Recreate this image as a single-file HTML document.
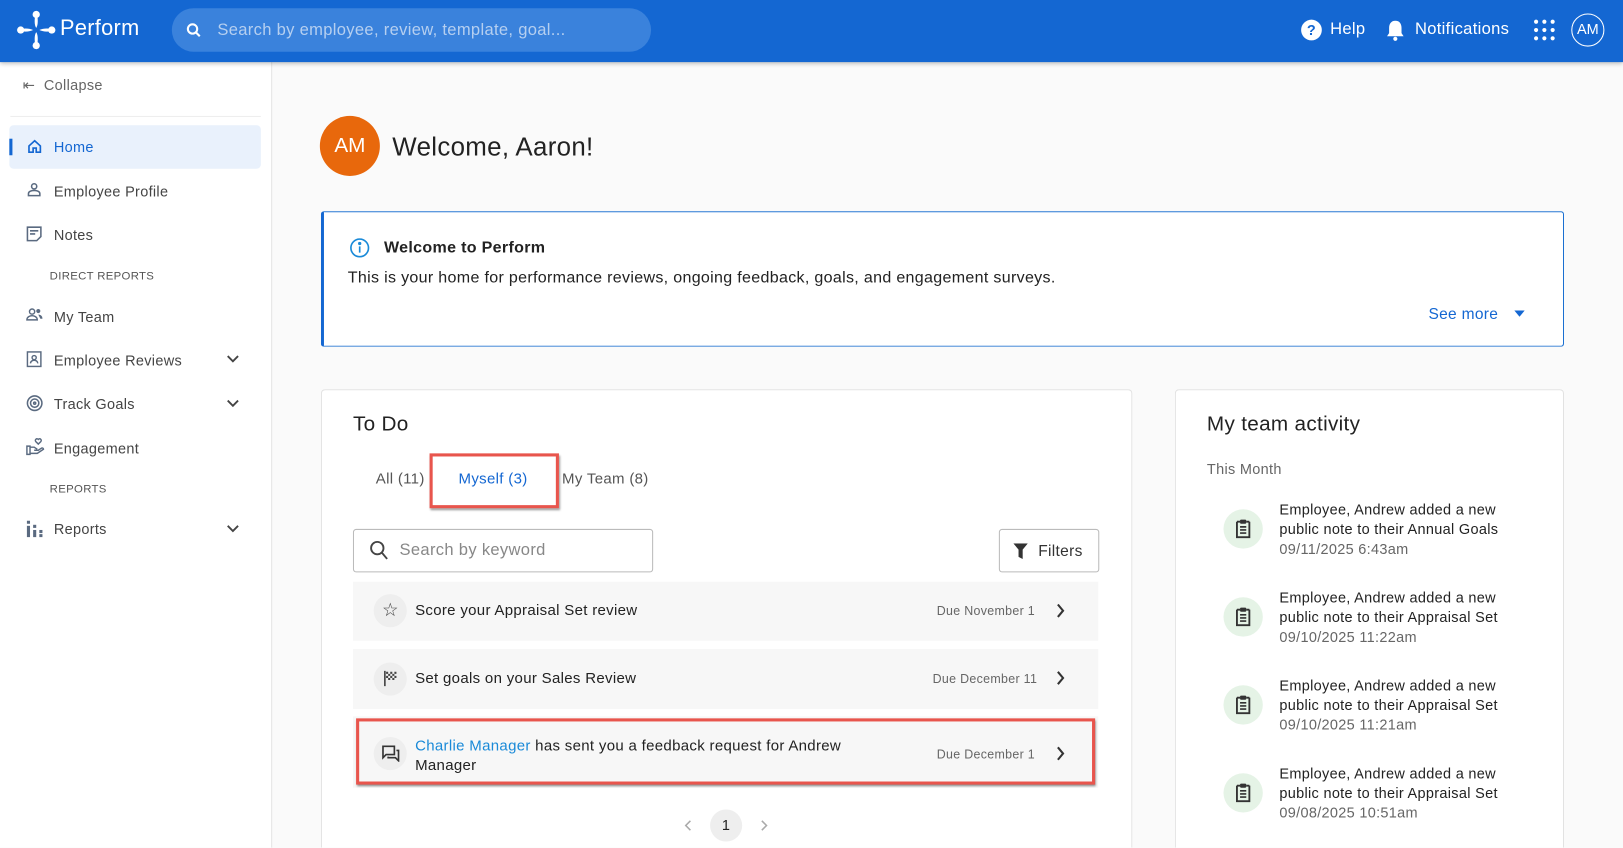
<!DOCTYPE html>
<html><head><meta charset="utf-8"><style>
*{box-sizing:border-box;margin:0;padding:0}
html,body{width:1623px;height:848px;overflow:hidden;background:#fafafa}
#w{position:absolute;left:0;top:0;width:1568px;height:819px;overflow:hidden;transform:scale(1.0351);transform-origin:0 0;font-family:"Liberation Sans",sans-serif;color:#222;letter-spacing:.3px}
.a{position:absolute;white-space:nowrap}
.hd{position:absolute;left:0;top:0;width:1568px;height:60px;background:#1467d2;box-shadow:0 2px 4px rgba(0,0,0,.25);z-index:2}
.side{position:absolute;left:0;top:60px;width:263px;height:759px;background:#fff;border-right:1px solid #e3e3e3}
.nav{font-size:14px;color:#444}
.sec{font-size:11px;color:#555}
.card{position:absolute;background:#fff;border:1px solid #e2e2e2;border-bottom:none;border-radius:4px 4px 0 0}
.row{position:absolute;left:341px;width:720px;background:#f7f7f7}
.ic{position:absolute;width:32px;height:32px;border-radius:50%;background:#eeeeee}
.due{font-size:12px;color:#666}
.gi{position:absolute;width:38px;height:38px;border-radius:50%;background:#e5f3e6}
.at{font-size:14px;color:#222;line-height:19px}
.at span{color:#666}
</style></head><body><div id="w">
<div class="hd">
<svg class="a" style="left:16px;top:10px" width="38" height="38" viewBox="0 0 38 38" fill="#fff"><path d="M19 0 C21 8 21 14 19 17 C17 14 17 8 19 0Z M19 38 C17 30 17 24 19 21 C21 24 21 30 19 38Z"/><path d="M0 19 C6 17 12 17 16 19 C12 21 6 21 0 19Z M38 19 C32 21 26 21 22 19 C26 17 32 17 38 19Z"/><circle cx="4" cy="19" r="3.5"/><circle cx="34" cy="19" r="3.5"/><circle cx="19" cy="4" r="3.5"/><circle cx="19" cy="34" r="3.5"/></svg>
<div class="a" style="left:58px;top:16px;font-size:21px;color:#fff">Perform</div>
<div class="a" style="left:166px;top:8px;width:463px;height:42px;border-radius:21px;background:#3a82dc"></div>
<svg class="a" style="left:180px;top:22px" width="14" height="14" viewBox="0 0 14 14" fill="none" stroke="#fff" stroke-width="2"><circle cx="6" cy="6" r="4.5"/><path d="M9.5 9.5L13 13"/></svg>
<div class="a" style="left:210px;top:21px;font-size:16px;color:#b5cff0">Search by employee, review, template, goal...</div>
<svg class="a" style="left:1256px;top:18px" width="22" height="22" viewBox="0 0 22 22"><circle cx="11" cy="11" r="10" fill="#fff"/><text x="11" y="16" font-size="14" font-weight="bold" text-anchor="middle" fill="#1467d2" font-family="Liberation Sans">?</text></svg>
<div class="a" style="left:1285px;top:20px;font-size:16px;color:#fff">Help</div>
<svg class="a" style="left:1338px;top:18px" width="20" height="22" viewBox="0 0 20 22" fill="#fff"><path d="M10 2C6 2 4 5 4 9v5l-2 3h16l-2-3V9c0-4-2-7-6-7z"/><circle cx="10" cy="19.5" r="2"/></svg>
<div class="a" style="left:1367px;top:20px;font-size:16px;color:#fff">Notifications</div>
<svg class="a" style="left:1481px;top:18px" width="22" height="22" fill="#fff"><circle cx="3" cy="3" r="2"/><circle cx="11" cy="3" r="2"/><circle cx="19" cy="3" r="2"/><circle cx="3" cy="11" r="2"/><circle cx="11" cy="11" r="2"/><circle cx="19" cy="11" r="2"/><circle cx="3" cy="19" r="2"/><circle cx="11" cy="19" r="2"/><circle cx="19" cy="19" r="2"/></svg>
<div class="a" style="left:1518px;top:13px;width:32px;height:32px;border:1.5px solid #fff;border-radius:50%;color:#fff;font-size:14px;text-align:center;line-height:29px;letter-spacing:0">AM</div>
</div>
<div class="side"></div>
<div class="a nav" style="left:22px;top:74px;color:#666">⇤&nbsp; Collapse</div>
<div class="a" style="left:10px;top:112px;width:242px;height:1px;background:#eee"></div>
<div class="a" style="left:9px;top:121px;width:243px;height:42px;background:#e9f1fc;border-radius:4px"></div>
<div class="a" style="left:9px;top:134px;width:3px;height:16px;background:#1467d2"></div>
<svg class="a" style="left:26px;top:134px" width="15" height="14" fill="none" stroke="#1467d2" stroke-width="1.6"><path d="M2 7L7.5 2 13 7V13H9V9H6V13H2Z"/></svg>
<div class="a nav" style="left:52px;top:134px;color:#1467d2">Home</div>
<svg class="a" style="left:26px;top:176px" width="14" height="14" fill="none" stroke="#5a6a80" stroke-width="1.5"><circle cx="7" cy="4" r="2.5"/><path d="M1.5 13V11c0-2 3-3 5.5-3s5.5 1 5.5 3v2z"/></svg>
<div class="a nav" style="left:52px;top:177px">Employee Profile</div>
<svg class="a" style="left:25px;top:218px" width="16" height="16" fill="none" stroke="#5a6a80" stroke-width="1.5"><path d="M1.5 1.5h13v9l-4 4h-9z M4 5h8 M4 8h5"/></svg>
<div class="a nav" style="left:52px;top:219px">Notes</div>
<div class="a sec" style="left:48px;top:261px">DIRECT REPORTS</div>
<svg class="a" style="left:25px;top:297px" width="17" height="14" fill="#5a6a80"><circle cx="6" cy="4" r="2.5" fill="none" stroke="#5a6a80" stroke-width="1.4"/><path d="M1 12c0-3 3-4 5-4s5 1 5 4z" fill="none" stroke="#5a6a80" stroke-width="1.4"/><circle cx="12" cy="3.5" r="2"/><path d="M12 7c2 0 4 1 4 4h-2z"/></svg>
<div class="a nav" style="left:52px;top:298px">My Team</div>
<svg class="a" style="left:25px;top:338px" width="16" height="17" fill="none" stroke="#5a6a80" stroke-width="1.4"><rect x="1.5" y="2" width="13" height="14"/><circle cx="8" cy="7.5" r="2"/><path d="M4.5 13c0-2 2-3 3.5-3s3.5 1 3.5 3"/></svg>
<div class="a nav" style="left:52px;top:340px">Employee Reviews</div>
<svg class="a" style="left:25px;top:381px" width="17" height="17" fill="none" stroke="#5a6a80" stroke-width="1.5"><circle cx="8.5" cy="8.5" r="7"/><circle cx="8.5" cy="8.5" r="4"/><circle cx="8.5" cy="8.5" r="1"/></svg>
<div class="a nav" style="left:52px;top:382px">Track Goals</div>
<svg class="a" style="left:25px;top:423px" width="18" height="17" fill="none" stroke="#5a6a80" stroke-width="1.4"><path d="M1 8v8h3V8z M4 15h7l6-4c0-1-1-1.5-2-1l-3 2H8 M4 9h4l3 2"/><path d="M12 6l-2.5-2.5a1.5 1.5 0 0 1 2.5-2 1.5 1.5 0 0 1 2.5 2z"/></svg>
<div class="a nav" style="left:52px;top:425px">Engagement</div>
<div class="a sec" style="left:48px;top:467px">REPORTS</div>
<svg class="a" style="left:25px;top:503px" width="18" height="16" fill="#5a6a80"><rect x="1" y="0" width="3" height="3"/><rect x="1" y="5" width="3" height="11"/><rect x="7" y="4" width="3" height="3"/><rect x="7" y="9" width="3" height="7"/><rect x="13" y="9" width="3" height="3"/><rect x="13" y="13" width="3" height="3"/></svg>
<div class="a nav" style="left:52px;top:503px">Reports</div>
<svg class="a" style="left:219px;top:343px" width="12" height="8" fill="none" stroke="#444" stroke-width="1.8"><path d="M1 1l5 5 5-5"/></svg>
<svg class="a" style="left:219px;top:386px" width="12" height="8" fill="none" stroke="#444" stroke-width="1.8"><path d="M1 1l5 5 5-5"/></svg>
<svg class="a" style="left:219px;top:507px" width="12" height="8" fill="none" stroke="#444" stroke-width="1.8"><path d="M1 1l5 5 5-5"/></svg>

<div class="a" style="left:309px;top:112px;width:58px;height:58px;border-radius:50%;background:#e8680c;color:#fff;font-size:20px;text-align:center;line-height:58px;letter-spacing:0">AM</div>
<div class="a" style="left:379px;top:128px;font-size:25px;color:#222">Welcome, Aaron!</div>

<div class="a" style="left:310px;top:204px;width:1201px;height:131px;background:#fff;border:1px solid #1a6fd1;border-left:3px solid #1467d2;border-radius:3px"></div>
<svg class="a" style="left:338px;top:230px" width="19" height="19" fill="none" stroke="#1a8ad8" stroke-width="1.6"><circle cx="9.5" cy="9.5" r="8.5"/><path d="M9.5 8v6"/><circle cx="9.5" cy="5.3" r=".8" fill="#1a8ad8"/></svg>
<div class="a" style="left:371px;top:231px;font-size:15.5px;font-weight:bold">Welcome to Perform</div>
<div class="a" style="left:336px;top:260px;font-size:15.5px">This is your home for performance reviews, ongoing feedback, goals, and engagement surveys.</div>
<div class="a" style="left:1380px;top:295px;font-size:15px;color:#1467d2">See more</div>
<svg class="a" style="left:1463px;top:300px" width="10" height="6" fill="#1467d2"><path d="M0 0h10L5 6z"/></svg>

<div class="card" style="left:310px;top:376px;width:784px;height:443px"></div>
<div class="a" style="left:341px;top:399px;font-size:20px">To Do</div>
<div class="a" style="left:363px;top:455px;font-size:14.5px;color:#555">All (11)</div>
<div class="a" style="left:415px;top:438px;width:125px;height:53px;border:3px solid #e8554d;box-shadow:1px 2px 2px rgba(0,0,0,.4);background:#fff"></div>
<div class="a" style="left:443px;top:455px;font-size:14.5px;color:#1467d2">Myself (3)</div>
<div class="a" style="left:543px;top:455px;font-size:14.5px;color:#555">My Team (8)</div>
<div class="a" style="left:341px;top:511px;width:290px;height:42px;border:1px solid #bbb;border-radius:3px;background:#fff"></div>
<svg class="a" style="left:357px;top:522px" width="18" height="19" fill="none" stroke="#444" stroke-width="1.8"><circle cx="7.5" cy="7.5" r="6"/><path d="M12 12l5 6"/></svg>
<div class="a" style="left:386px;top:523px;font-size:16px;color:#888">Search by keyword</div>
<div class="a" style="left:965px;top:511px;width:97px;height:42px;border:1px solid #bbb;border-radius:3px;background:#fff"></div>
<svg class="a" style="left:979px;top:525px" width="14" height="15" fill="#333"><path d="M0 0h14L9 6v9L5 13V6z"/></svg>
<div class="a" style="left:1003px;top:524px;font-size:15px;color:#333">Filters</div>

<div class="row" style="top:562px;height:57px"></div>
<div class="ic" style="left:361px;top:574px"></div>
<div class="a" style="left:369px;top:579px;font-size:18px;color:#444">☆</div>
<div class="a" style="left:401px;top:582px;font-size:14.5px">Score your Appraisal Set review</div>
<div class="a due" style="left:905px;top:583px">Due November 1</div>
<svg class="a" style="left:1020px;top:583px" width="9" height="14" fill="none" stroke="#333" stroke-width="2"><path d="M2 1l5 6-5 6"/></svg>

<div class="row" style="top:627px;height:58px"></div>
<div class="ic" style="left:361px;top:640px"></div>
<svg class="a" style="left:371px;top:648px" width="13" height="15" fill="#444"><rect x="0" y="0" width="1.6" height="15"/><path d="M2 1h2v2H2zM6 1h2v2H6zM10 1h2v2h-2zM4 3h2v2H4zM8 3h2v2H8zM2 5h2v2H2zM6 5h2v2H6zM10 5h2v2h-2zM4 7h2v2H4zM8 7h2v2H8z"/></svg>
<div class="a" style="left:401px;top:648px;font-size:14.5px">Set goals on your Sales Review</div>
<div class="a due" style="left:901px;top:649px">Due December 11</div>
<svg class="a" style="left:1020px;top:648px" width="9" height="14" fill="none" stroke="#333" stroke-width="2"><path d="M2 1l5 6-5 6"/></svg>

<div class="row" style="top:692px;height:69px"></div>
<div class="a" style="left:344px;top:694px;width:714px;height:64px;border:3px solid #e8554d;box-shadow:1px 2px 2px rgba(0,0,0,.45)"></div>
<div class="ic" style="left:361px;top:712px"></div>
<svg class="a" style="left:369px;top:720px" width="17" height="16" fill="none" stroke="#333" stroke-width="1.6"><path d="M1 1h11v8H4L1 12z M14 5h2v10l-3-3H6v-1"/></svg>
<div class="a" style="left:401px;top:712px;font-size:14.5px;line-height:19px"><span style="color:#1a8ad8">Charlie Manager</span> has sent you a feedback request for Andrew<br>Manager</div>
<div class="a due" style="left:905px;top:722px">Due December 1</div>
<svg class="a" style="left:1020px;top:721px" width="9" height="14" fill="none" stroke="#333" stroke-width="2"><path d="M2 1l5 6-5 6"/></svg>

<svg class="a" style="left:661px;top:792px" width="7" height="11" fill="none" stroke="#aaa" stroke-width="1.5"><path d="M6 1L1.5 5.5 6 10"/></svg>
<div class="a" style="left:686px;top:782px;width:31px;height:31px;border-radius:50%;background:#eee;text-align:center;line-height:31px;font-size:14px">1</div>
<svg class="a" style="left:735px;top:792px" width="7" height="11" fill="none" stroke="#aaa" stroke-width="1.5"><path d="M1 1l4.5 4.5L1 10"/></svg>

<div class="card" style="left:1135px;top:376px;width:376px;height:443px"></div>
<div class="a" style="left:1166px;top:399px;font-size:20px">My team activity</div>
<div class="a" style="left:1166px;top:445px;font-size:14px;color:#666">This Month</div>

<div class="gi" style="left:1182px;top:492px"></div>
<div class="gi" style="left:1182px;top:577px"></div>
<div class="gi" style="left:1182px;top:662px"></div>
<div class="gi" style="left:1182px;top:747px"></div>
<svg width="0" height="0" style="position:absolute"><defs><g id="clip"><path d="M3 3h3M12 3h3M3 3v15h12V3" fill="none" stroke="#333" stroke-width="1.8"/><rect x="6" y="1" width="6" height="4" rx="1" fill="#333"/><path d="M6 8h6M6 11h6M6 14h6" stroke="#333" stroke-width="1.6"/></g></defs></svg>
<svg class="a" style="left:1192px;top:501px" width="18" height="20"><use href="#clip"/></svg>
<svg class="a" style="left:1192px;top:586px" width="18" height="20"><use href="#clip"/></svg>
<svg class="a" style="left:1192px;top:671px" width="18" height="20"><use href="#clip"/></svg>
<svg class="a" style="left:1192px;top:756px" width="18" height="20"><use href="#clip"/></svg>
<div class="a at" style="left:1236px;top:483px">Employee, Andrew added a new<br>public note to their Annual Goals<br><span>09/11/2025 6:43am</span></div>
<div class="a at" style="left:1236px;top:568px">Employee, Andrew added a new<br>public note to their Appraisal Set<br><span>09/10/2025 11:22am</span></div>
<div class="a at" style="left:1236px;top:653px">Employee, Andrew added a new<br>public note to their Appraisal Set<br><span>09/10/2025 11:21am</span></div>
<div class="a at" style="left:1236px;top:738px">Employee, Andrew added a new<br>public note to their Appraisal Set<br><span>09/08/2025 10:51am</span></div>
</div></body></html>
